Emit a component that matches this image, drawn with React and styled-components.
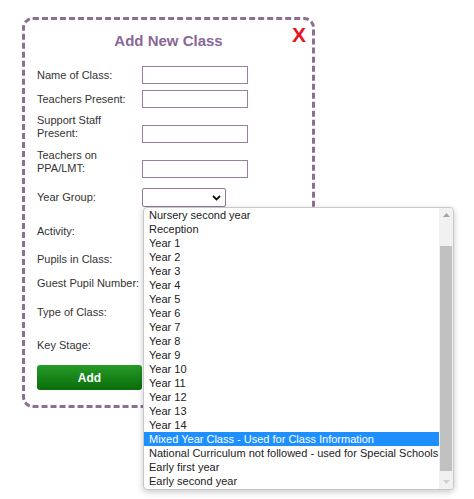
import React from 'react'
import styled, { createGlobalStyle } from 'styled-components'

const GlobalStyle = createGlobalStyle`
  html, body {
    margin: 0;
    padding: 0;
    background: #ffffff;
  }
  body {
    font-family: 'Liberation Sans', Arial, sans-serif;
    color: #333;
  }
`

const yearGroups = [
  'Nursery second year',
  'Reception',
  'Year 1',
  'Year 2',
  'Year 3',
  'Year 4',
  'Year 5',
  'Year 6',
  'Year 7',
  'Year 8',
  'Year 9',
  'Year 10',
  'Year 11',
  'Year 12',
  'Year 13',
  'Year 14',
  'Mixed Year Class - Used for Class Information',
  'National Curriculum not followed - used for Special Schools',
  'Early first year',
  'Early second year',
]

const fields = [
  { label: 'Name of Class:', h: 18, kind: 'input' },
  { label: 'Teachers Present:', h: 18, kind: 'input' },
  { label: 'Support Staff Present:', h: 29, kind: 'input', tall: true },
  { label: 'Teachers on PPA/LMT:', h: 29, kind: 'input', tall: true },
  { label: 'Year Group:', h: 27, kind: 'select' },
  { label: 'Activity:', h: 28 },
  { label: 'Pupils in Class:', h: 16 },
  { label: 'Guest Pupil Number:', h: 20 },
  { label: 'Type of Class:', h: 26 },
  { label: 'Key Stage:', h: 28 },
]

function App() {
  return (
    <>
      <GlobalStyle />
      <Page>
        <Dialog>
          <Title>Add New Class</Title>
          <CloseX>X</CloseX>
          <Fields>
            {fields.map((f) => (
              <Row key={f.label} $h={f.h}>
                <Label $tall={f.tall}>{f.label}</Label>
                {f.kind === 'input' && <TextBox type="text" $tall={f.tall} />}
                {f.kind === 'select' && (
                  <SelectWrap>
                    <SelectBox>
                      <svg width="9" height="6" viewBox="0 0 9 6">
                        <path d="M1 1 L4.5 4.5 L8 1" fill="none" stroke="#111" strokeWidth="1.8" />
                      </svg>
                    </SelectBox>
                    <DropList>
                      <Options>
                        {yearGroups.map((y) => (
                          <Option key={y} $active={y.startsWith('Mixed')}>{y}</Option>
                        ))}
                      </Options>
                      <ScrollBar>
                        <Arrow>
                          <svg width="7" height="4" viewBox="0 0 7 4"><path d="M0 4 L3.5 0 L7 4 Z" fill="#a3a3a3" /></svg>
                        </Arrow>
                        <Track>
                          <Thumb />
                        </Track>
                        <Arrow>
                          <svg width="7" height="4" viewBox="0 0 7 4"><path d="M0 0 L3.5 4 L7 0 Z" fill="#cfcfcf" /></svg>
                        </Arrow>
                      </ScrollBar>
                    </DropList>
                  </SelectWrap>
                )}
              </Row>
            ))}
            <AddButton>Add</AddButton>
          </Fields>
        </Dialog>
      </Page>
    </>
  )
}

export default App

const Page = styled.div`
  padding: 17px 0 0 22px;
  width: 474px;
  height: 499px;
  box-sizing: border-box;
`

const Dialog = styled.div`
  position: relative;
  width: 293px;
  box-sizing: border-box;
  border: 3px dashed #8d6f93;
  border-radius: 11px;
  padding: 12px 12px 15px 12px;
`

const Title = styled.div`
  text-align: center;
  font-size: 15px;
  font-weight: bold;
  line-height: 18px;
  color: #8a6798;
  margin-bottom: 16px;
`

const CloseX = styled.span`
  position: absolute;
  top: 4px;
  right: 6px;
  font-size: 21px;
  font-weight: bold;
  line-height: 22px;
  color: #e6141c;
  cursor: pointer;
`

const Fields = styled.div`
  display: flex;
  flex-direction: column;
  gap: 6px;
`

const Row = styled.div`
  display: flex;
  align-items: center;
  height: ${(p) => p.$h}px;
`

const Label = styled.div`
  width: 105px;
  flex: none;
  font-size: 11px;
  line-height: 13px;
  color: #333;
  align-self: ${(p) => (p.$tall ? 'flex-start' : 'center')};
`

const TextBox = styled.input`
  width: 106px;
  height: 18px;
  box-sizing: border-box;
  border: 1px solid #9a7ea1;
  padding: 0 3px;
  margin: 0;
  align-self: ${(p) => (p.$tall ? 'flex-end' : 'center')};
`

const SelectWrap = styled.div`
  position: relative;
  align-self: flex-end;
  margin-bottom: 4px;
`

const SelectBox = styled.div`
  width: 84px;
  height: 19px;
  box-sizing: border-box;
  border: 1px solid #8f7a93;
  border-radius: 2px;
  display: flex;
  align-items: center;
  justify-content: flex-end;
  padding-right: 4px;
  background: #fff;
`

const DropList = styled.div`
  position: absolute;
  top: 100%;
  left: 1px;
  width: 311px;
  height: 283px;
  box-sizing: border-box;
  display: flex;
  background: #fff;
  border: 1px solid #c8c8c8;
  border-radius: 4px;
  box-shadow: 0 2px 6px rgba(0, 0, 0, 0.22);
  overflow: hidden;
  z-index: 10;
`

const Options = styled.div`
  flex: 1;
`

const Option = styled.div`
  height: 14px;
  line-height: 14px;
  font-size: 11px;
  padding-left: 5px;
  white-space: nowrap;
  color: ${(p) => (p.$active ? '#fff' : '#222')};
  background: ${(p) => (p.$active ? '#1e8fff' : 'transparent')};
`

const ScrollBar = styled.div`
  width: 14px;
  flex: none;
  display: flex;
  flex-direction: column;
  background: #f1f1f1;
`

const Arrow = styled.div`
  height: 14px;
  display: flex;
  align-items: center;
  justify-content: center;
`

const Track = styled.div`
  flex: 1;
  padding: 24px 1px 4px 1px;
  display: flex;
`

const Thumb = styled.div`
  flex: 1;
  background: #c1c1c1;
`

const AddButton = styled.button`
  width: 105px;
  height: 25px;
  border: none;
  border-radius: 3px;
  background: linear-gradient(#279b27, #0a6c0a);
  color: #fff;
  font-family: 'Liberation Sans', Arial, sans-serif;
  font-size: 12px;
  font-weight: bold;
  cursor: pointer;
`
